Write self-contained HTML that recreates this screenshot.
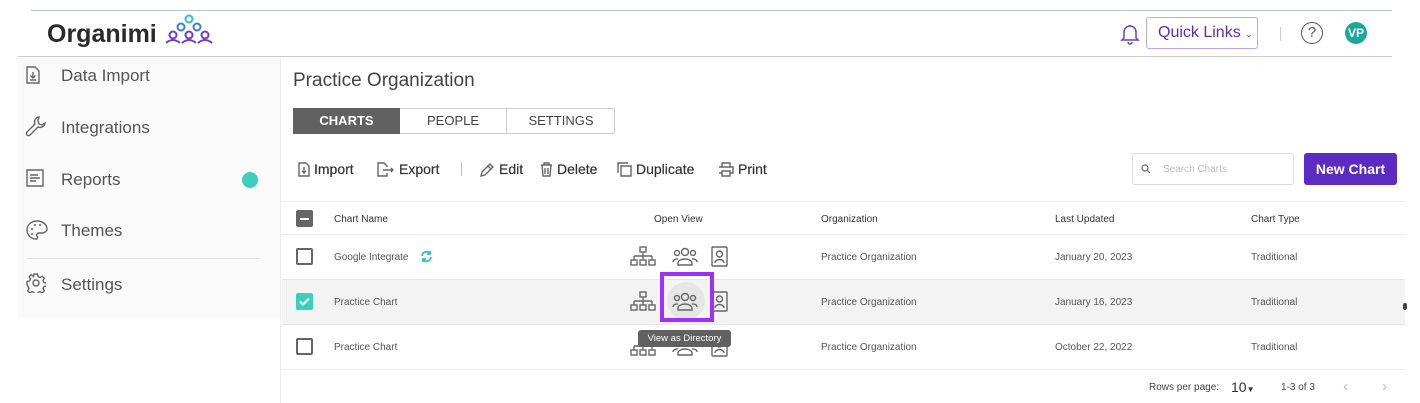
<!DOCTYPE html>
<html><head><meta charset="utf-8">
<style>
*{margin:0;padding:0;box-sizing:border-box}
body{width:1420px;height:403px;background:#fff;font-family:"Liberation Sans",sans-serif;position:relative;overflow:hidden;color:#333}
.a{position:absolute}
.side{color:#555;font-size:17px}
.tb{font-size:14px;color:#333;top:161px;display:flex;align-items:center;gap:4px;-webkit-text-stroke:0.2px #333}
.th{font-size:10px;color:#333;top:214px}
.td{font-size:10px;color:#555}
svg{display:block}
.ic{stroke:#666;fill:none;stroke-width:1.4}
</style></head><body>
<div class="a" style="left:31px;top:10px;width:1361px;height:1px;background:#b7c6e6"></div>
<div class="a" style="left:18px;top:56px;width:1374px;height:1px;background:#ccc"></div>
<div class="a" style="left:47px;top:20px;font-size:25px;font-weight:bold;color:#2a2a2a;letter-spacing:0px">Organimi</div>
<svg class="a" style="left:163px;top:14px" width="52" height="30" viewBox="0 0 52 30">
<g fill="none" stroke-width="2"><circle cx="26" cy="5" r="3.5" stroke="#2ec4b6"/>
<circle cx="18" cy="13" r="3.5" stroke="#3d7bdc"/><circle cx="34" cy="13" r="3.5" stroke="#3d7bdc"/>
<circle cx="10" cy="21" r="3.5" stroke="#6a3fd1"/><circle cx="26" cy="21" r="3.5" stroke="#6a3fd1"/><circle cx="42" cy="21" r="3.5" stroke="#6a3fd1"/>
<path d="M3 29q7-6 14 0M19 29q7-6 14 0M35 29q7-6 14 0" stroke="#6a3fd1"/></g></svg>
<svg class="a" style="left:1120px;top:23px" width="20" height="22" viewBox="0 0 20 22"><path d="M4 15V9a6 6 0 0 1 12 0v6l2 2H2zM8 19a2 2 0 0 0 4 0M10 2v1" fill="none" stroke="#6a3fd1" stroke-width="1.5"/></svg>
<div class="a" style="left:1146px;top:17px;width:112px;height:32px;border:1px solid #b9a8ee;border-radius:3px;color:#5b2bc4;font-size:16px;padding:6px 0 0 11px">Quick Links <span style="font-size:9px">&#8964;</span></div>
<div class="a" style="left:1280px;top:27px;width:1px;height:14px;background:#ccc"></div>
<div class="a" style="left:1301px;top:22px;width:22px;height:22px;border:1.5px solid #555;border-radius:50%;text-align:center;font-size:15px;line-height:19px;color:#555">?</div>
<div class="a" style="left:1345px;top:22px;width:22px;height:22px;background:#1aa89c;border-radius:50%;text-align:center;font-size:12px;font-weight:bold;line-height:22px;color:#fff">VP</div>

<div class="a" style="left:18px;top:58px;width:262px;height:260px;background:#fafafa"></div>
<svg class="a" style="left:26px;top:66px" width="14" height="18" viewBox="0 0 14 18"><path class="ic" d="M1 1h8l4 4v12H1zM7 6v6M4.5 9.5L7 12l2.5-2.5M4 14h6"/></svg>
<div class="a side" style="left:61px;top:66px">Data Import</div>
<svg class="a" style="left:25px;top:115px" width="22" height="22" viewBox="0 0 22 22"><path class="ic" d="M14 2a5 5 0 0 0-4 7L2 17a2 2 0 0 0 3 3l8-8a5 5 0 0 0 7-4l-3 2-3-1-1-3z"/></svg>
<div class="a side" style="left:61px;top:118px">Integrations</div>
<svg class="a" style="left:26px;top:169px" width="18" height="18" viewBox="0 0 18 18"><path class="ic" d="M1 1h16v16H1zM4 6h8M4 9h10M4 12h6"/></svg>
<div class="a side" style="left:61px;top:170px">Reports</div>
<div class="a" style="left:242px;top:172px;width:16px;height:16px;border-radius:50%;background:#3ccfbc"></div>
<svg class="a" style="left:26px;top:220px" width="22" height="20" viewBox="0 0 22 20"><path class="ic" d="M11 1C5 1 1 5 1 10s4 9 9 9c2 0 2-2 1-3s0-3 2-3h3c3 0 5-2 5-4C21 4 16 1 11 1z"/><circle cx="6" cy="9" r="1" fill="#666"/><circle cx="9" cy="5" r="1" fill="#666"/><circle cx="14" cy="5" r="1" fill="#666"/><circle cx="6" cy="14" r="1" fill="#666"/></svg>
<div class="a side" style="left:61px;top:221px">Themes</div>
<div class="a" style="left:27px;top:258px;width:232px;height:1px;background:#ddd"></div>
<svg class="a" style="left:26px;top:273px" width="20" height="20" viewBox="0 0 20 20"><circle class="ic" cx="10" cy="10" r="3"/><path class="ic" d="M8.5 1h3l.5 2.5 2 1 2.3-1.3 2 2-1.3 2.3 1 2 2.5.5v3l-2.5.5-1 2 1.3 2.3-2 2-2.3-1.3-2 1-.5 2.5h-3l-.5-2.5-2-1-2.3 1.3-2-2 1.3-2.3-1-2L1 11.5v-3l2.5-.5 1-2-1.3-2.3 2-2L7.5 3.5l.5-2.5z"/></svg>
<div class="a side" style="left:61px;top:275px">Settings</div>

<div class="a" style="left:280px;top:58px;width:1px;height:345px;background:#eee"></div>
<div class="a" style="left:293px;top:70px;font-size:19px;color:#444">Practice Organization</div>
<div class="a" style="left:293px;top:108px;width:322px;height:26px;border:1px solid #ccc;border-radius:2px"></div>
<div class="a" style="left:293px;top:108px;width:107px;height:26px;background:#616161;color:#fff;font-size:13px;font-weight:bold;text-align:center;line-height:26px">CHARTS</div>
<div class="a" style="left:400px;top:108px;width:107px;height:26px;color:#444;font-size:13px;text-align:center;line-height:26px;border-right:1px solid #ccc">PEOPLE</div>
<div class="a" style="left:507px;top:108px;width:108px;height:26px;color:#444;font-size:13px;text-align:center;line-height:26px">SETTINGS</div>

<div class="a tb" style="left:298px"><svg width="12" height="15" viewBox="0 0 12 15"><path class="ic" d="M1 1h7l3 3v10H1zM6 5v6M4 9l2 2 2-2"/></svg>Import</div>
<div class="a tb" style="left:377px"><svg width="18" height="15" viewBox="0 0 18 15"><path class="ic" d="M10 5V4L7 1H1v13h9v-3M6 8h10M14 6l2 2-2 2"/></svg>Export</div>
<div class="a" style="left:461px;top:162px;width:1px;height:14px;background:#bbb"></div>
<div class="a tb" style="left:479px"><svg width="16" height="15" viewBox="0 0 16 15"><path class="ic" d="M2 14l1-4L11 2l3 3-8 8zM9 4l3 3"/></svg>Edit</div>
<div class="a tb" style="left:540px"><svg width="13" height="15" viewBox="0 0 13 15"><path class="ic" d="M1 3h11M4 3V1h5v2M2 3l1 11h7l1-11M5 6v6M8 6v6"/></svg>Delete</div>
<div class="a tb" style="left:617px"><svg width="15" height="15" viewBox="0 0 15 15"><path class="ic" d="M4 4h10v10H4zM1 11V1h10"/></svg>Duplicate</div>
<div class="a tb" style="left:718px"><svg width="16" height="15" viewBox="0 0 16 15"><path class="ic" d="M4 5V1h8v4M1 5h14v6h-3M4 11H1M4 9h8v5H4z"/></svg>Print</div>

<div class="a" style="left:1132px;top:153px;width:162px;height:32px;border:1px solid #ddd;border-radius:3px"></div>
<svg class="a" style="left:1141px;top:164px" width="10" height="10" viewBox="0 0 10 10"><circle cx="4" cy="4" r="3" fill="none" stroke="#666" stroke-width="1.2"/><path d="M6.5 6.5L9 9" stroke="#666" stroke-width="1.2"/></svg>
<div class="a" style="left:1163px;top:164px;font-size:10px;color:#bbb">Search Charts</div>
<div class="a" style="left:1304px;top:153px;width:93px;height:32px;background:#5b2bc4;border-radius:3px;color:#fff;font-size:14px;font-weight:bold;text-align:center;line-height:32px">New Chart</div>

<div class="a" style="left:282px;top:201px;width:1123px;height:1px;background:#eee"></div>
<div class="a" style="left:282px;top:234px;width:1123px;height:1px;background:#eee"></div>
<div class="a" style="left:282px;top:279px;width:1123px;height:45px;background:#f3f3f3"></div>
<div class="a" style="left:282px;top:279px;width:1123px;height:1px;background:#e6e6e6"></div>
<div class="a" style="left:282px;top:324px;width:1123px;height:1px;background:#e6e6e6"></div>
<div class="a" style="left:282px;top:369px;width:1123px;height:1px;background:#eee"></div>

<div class="a" style="left:296px;top:210px;width:17px;height:17px;background:#666;border-radius:2px"><div style="margin:7.5px 4px;height:2px;background:#fff"></div></div>
<div class="a th" style="left:334px">Chart Name</div>
<div class="a th" style="left:654px">Open View</div>
<div class="a th" style="left:821px">Organization</div>
<div class="a th" style="left:1055px">Last Updated</div>
<div class="a th" style="left:1251px">Chart Type</div>

<div class="a" style="left:296px;top:248px;width:17px;height:17px;border:2px solid #666;border-radius:2px"></div>
<div class="a td" style="left:334px;top:252px">Google Integrate</div>
<svg class="a" style="left:420px;top:250px" width="13" height="13" viewBox="0 0 13 13"><path d="M2 6a4.5 4.5 0 0 1 8-2.5M11 7a4.5 4.5 0 0 1-8 2.5M10 1v3H7M3 12V9h3" fill="none" stroke="#2ec4b6" stroke-width="1.8"/></svg>
<div class="a" style="left:296px;top:293px;width:17px;height:17px;background:#3ccfbc;border-radius:2px"><svg width="17" height="17" viewBox="0 0 17 17"><path d="M4 8.5l3 3 6-6" fill="none" stroke="#fff" stroke-width="2"/></svg></div>
<div class="a td" style="left:334px;top:297px">Practice Chart</div>
<div class="a" style="left:296px;top:338px;width:17px;height:17px;border:2px solid #666;border-radius:2px"></div>
<div class="a td" style="left:334px;top:342px">Practice Chart</div>

<div class="a td" style="left:821px;top:252px">Practice Organization</div>
<div class="a td" style="left:821px;top:297px">Practice Organization</div>
<div class="a td" style="left:821px;top:342px">Practice Organization</div>
<div class="a td" style="left:1055px;top:252px">January 20, 2023</div>
<div class="a td" style="left:1055px;top:297px">January 16, 2023</div>
<div class="a td" style="left:1055px;top:342px">October 22, 2022</div>
<div class="a td" style="left:1251px;top:252px">Traditional</div>
<div class="a td" style="left:1251px;top:297px">Traditional</div>
<div class="a td" style="left:1251px;top:342px">Traditional</div>

<svg width="0" height="0" style="position:absolute"><defs>
<g id="org" fill="none" stroke="#666" stroke-width="1.4"><rect x="10" y="1" width="6" height="5"/><path d="M13 6v4M4 10h18M4 10v4M13 10v4M22 10v4"/><rect x="1" y="14" width="6" height="5"/><rect x="10" y="14" width="6" height="5"/><rect x="19" y="14" width="6" height="5"/></g>
<g id="ppl" fill="none" stroke="#666" stroke-width="1.4"><circle cx="13" cy="5" r="3.5"/><circle cx="5" cy="6" r="2.5"/><circle cx="21" cy="6" r="2.5"/><path d="M6 18v-2a7 4 0 0 1 14 0v2zM1 15a4 3 0 0 1 5-3M25 15a4 3 0 0 0-5-3"/></g>
<g id="ct" fill="none" stroke="#666" stroke-width="1.4"><rect x="1" y="1" width="15" height="19" rx="1"/><circle cx="8.5" cy="8" r="3"/><path d="M4 17a4.5 3.5 0 0 1 9 0"/></g>
</defs></svg>
<svg class="a" style="left:630px;top:246px" width="26" height="20"><use href="#org"/></svg>
<svg class="a" style="left:672px;top:247px" width="26" height="20"><use href="#ppl"/></svg>
<svg class="a" style="left:711px;top:246px" width="17" height="21"><use href="#ct"/></svg>
<svg class="a" style="left:630px;top:291px" width="26" height="20"><use href="#org"/></svg>
<div class="a" style="left:667px;top:282px;width:38px;height:38px;border-radius:50%;background:#e6e6e6"></div>
<svg class="a" style="left:672px;top:292px" width="26" height="20"><use href="#ppl"/></svg>
<svg class="a" style="left:711px;top:291px" width="17" height="21"><use href="#ct"/></svg>
<svg class="a" style="left:630px;top:336px" width="26" height="20"><use href="#org"/></svg>
<svg class="a" style="left:672px;top:337px" width="26" height="20"><use href="#ppl"/></svg>
<svg class="a" style="left:711px;top:336px" width="17" height="21"><use href="#ct"/></svg>
<div class="a" style="left:660px;top:272px;width:54px;height:50px;border:4px solid #9b30ff"></div>
<div class="a" style="left:638px;top:330px;width:93px;height:17px;background:#616161;border-radius:3px;color:#fff;font-size:9.5px;text-align:center;line-height:17px">View as Directory</div>

<div class="a" style="left:1149px;top:382px;font-size:10px;color:#444">Rows per page:</div>
<div class="a" style="left:1231px;top:379px;font-size:14px;color:#333">10<span style="font-size:8px">&#9660;</span></div>
<div class="a" style="left:1281px;top:382px;font-size:10px;color:#444">1-3 of 3</div>
<div class="a" style="left:1343px;top:378px;font-size:15px;color:#bbb">&#8249;</div>
<div class="a" style="left:1382px;top:378px;font-size:15px;color:#bbb">&#8250;</div>
<div class="a" style="left:1403px;top:303px;width:4px;height:7px;border-radius:2px;background:#444"></div>
</body></html>
